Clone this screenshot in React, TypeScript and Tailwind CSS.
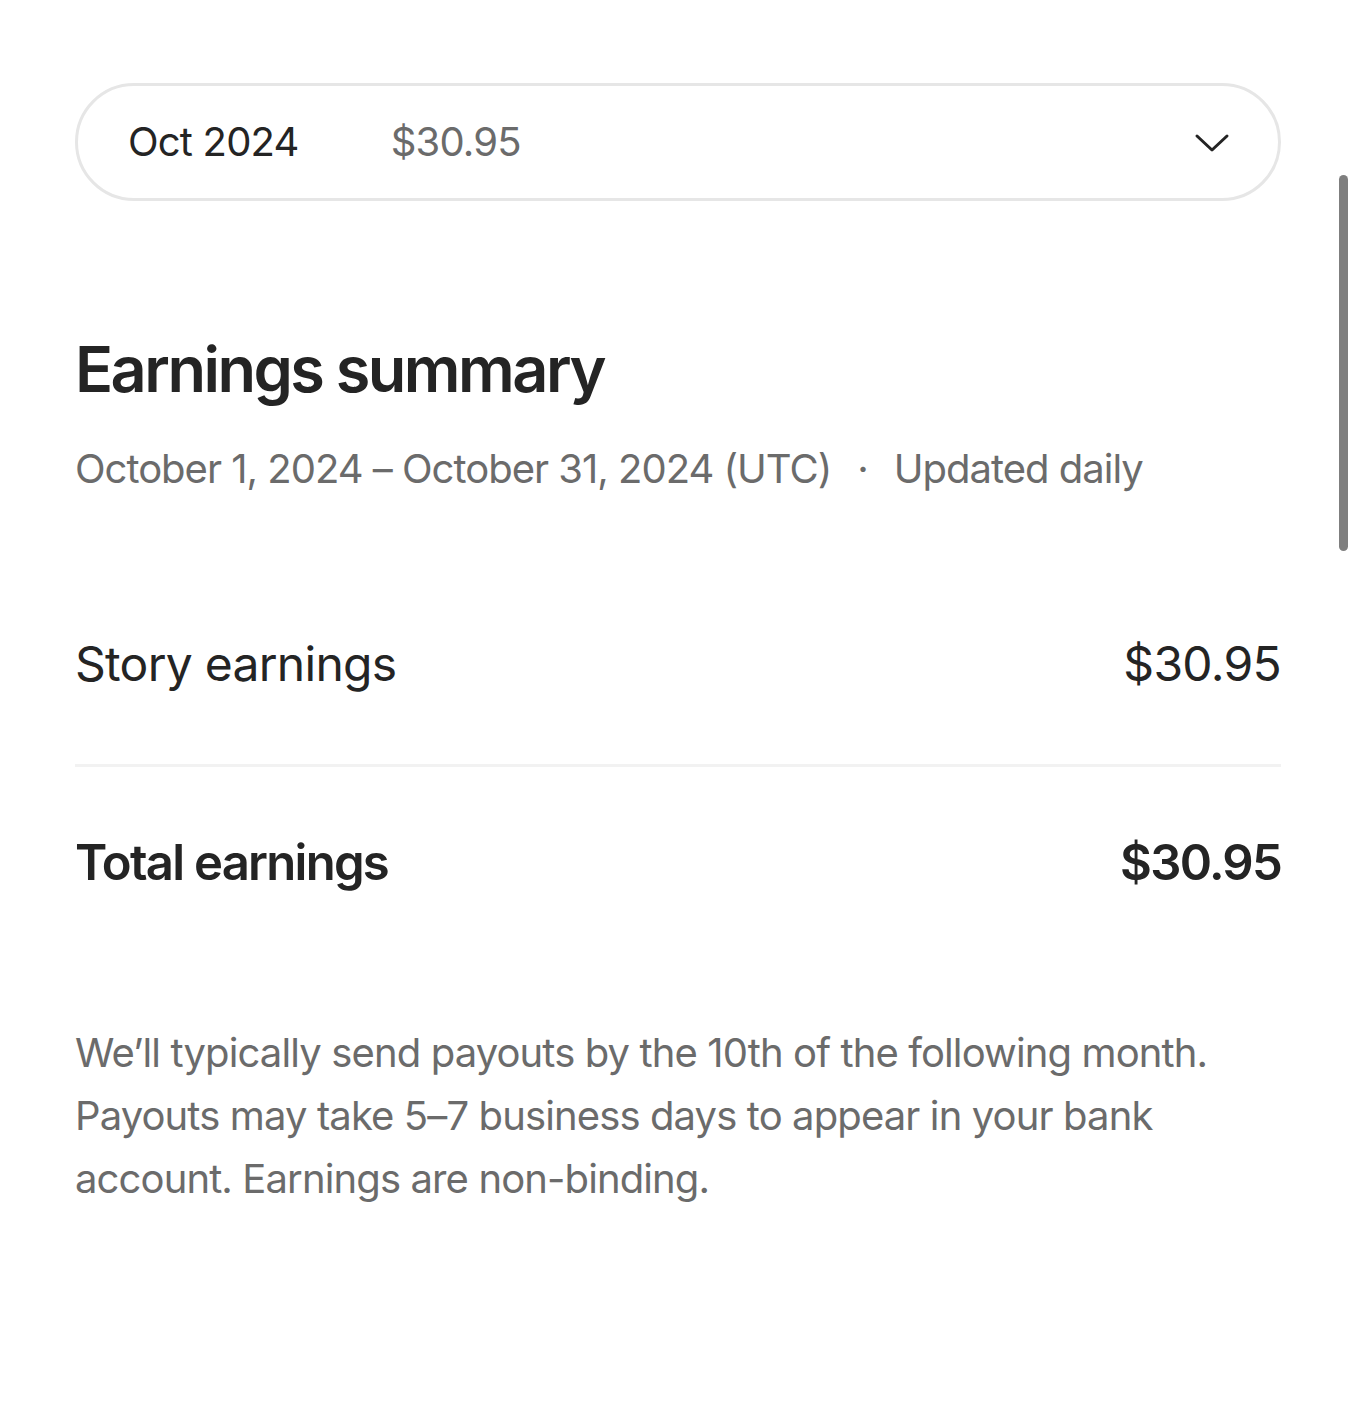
import React from "react";

export default function App() {
  return (
    <div className="relative w-[1358px] h-[1406px] bg-white overflow-hidden" style={{ fontFamily: "Inter, 'Liberation Sans', sans-serif" }}>
      <div className="pl-[75px] pr-[77px] pt-[83px]">
        <div className="h-[118px] rounded-full border-[3px] border-[#e6e6e6] flex items-center pl-[50px] pr-[48px]">
          <span className="text-[40px] text-[#242424] tracking-[-0.02em]">Oct 2024</span>
          <span className="ml-[92px] text-[40px] text-[#6b6b6b] tracking-[-0.02em]">$30.95</span>
          <svg className="ml-auto" width="36" height="24" viewBox="0 0 36 24" fill="none">
            <path d="M3 6 L18 20 L33 6" stroke="#242424" strokeWidth="3" strokeLinecap="round" strokeLinejoin="round" />
          </svg>
        </div>

        <h1 className="mt-[132px] text-[63px] font-semibold text-[#242424] tracking-[-0.04em] leading-[72px]">Earnings summary</h1>
        <p className="mt-[36px] text-[40px] text-[#6b6b6b] tracking-[-0.025em] leading-[56px] flex">
          <span>October 1, 2024 – October 31, 2024 (UTC)</span>
          <span className="mx-[26px]">·</span>
          <span>Updated daily</span>
        </p>

        <div className="mt-[137px] flex justify-between items-center text-[48px] text-[#242424] tracking-[-0.015em] leading-[60px]">
          <span>Story earnings</span>
          <span>$30.95</span>
        </div>
        <div className="mt-[70px] h-[3px] bg-[#f2f2f2]" />
        <div className="mt-[66px] flex justify-between items-center text-[49px] font-semibold text-[#242424] tracking-[-0.035em] leading-[60px]">
          <span>Total earnings</span>
          <span>$30.95</span>
        </div>

        <p className="mt-[128px] text-[40px] text-[#6b6b6b] tracking-[-0.022em] leading-[63px] max-w-[1160px]">
          We’ll typically send payouts by the 10th of the following month. Payouts may take 5–7 business days to appear in your bank account. Earnings are non-binding.
        </p>
      </div>
      <div className="absolute left-[1339px] top-[175px] w-[9px] h-[376px] rounded-full bg-[#7f7f7f]" />
    </div>
  );
}
